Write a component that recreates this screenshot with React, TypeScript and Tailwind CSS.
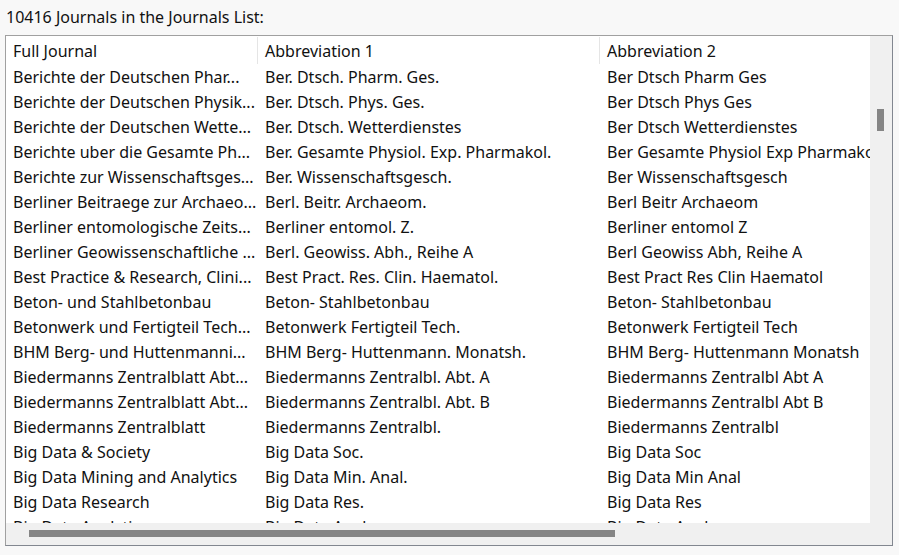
type Row = [string, string, string];

const rows: Row[] = [
  ["Berichte der Deutschen Phar...", "Ber. Dtsch. Pharm. Ges.", "Ber Dtsch Pharm Ges"],
  ["Berichte der Deutschen Physik...", "Ber. Dtsch. Phys. Ges.", "Ber Dtsch Phys Ges"],
  ["Berichte der Deutschen Wette...", "Ber. Dtsch. Wetterdienstes", "Ber Dtsch Wetterdienstes"],
  ["Berichte uber die Gesamte Ph...", "Ber. Gesamte Physiol. Exp. Pharmakol.", "Ber Gesamte Physiol Exp Pharmakol"],
  ["Berichte zur Wissenschaftsges...", "Ber. Wissenschaftsgesch.", "Ber Wissenschaftsgesch"],
  ["Berliner Beitraege zur Archaeo...", "Berl. Beitr. Archaeom.", "Berl Beitr Archaeom"],
  ["Berliner entomologische Zeits...", "Berliner entomol. Z.", "Berliner entomol Z"],
  ["Berliner Geowissenschaftliche ...", "Berl. Geowiss. Abh., Reihe A", "Berl Geowiss Abh, Reihe A"],
  ["Best Practice & Research, Clini...", "Best Pract. Res. Clin. Haematol.", "Best Pract Res Clin Haematol"],
  ["Beton- und Stahlbetonbau", "Beton- Stahlbetonbau", "Beton- Stahlbetonbau"],
  ["Betonwerk und Fertigteil Tech...", "Betonwerk Fertigteil Tech.", "Betonwerk Fertigteil Tech"],
  ["BHM Berg- und Huttenmanni...", "BHM Berg- Huttenmann. Monatsh.", "BHM Berg- Huttenmann Monatsh"],
  ["Biedermanns Zentralblatt Abt...", "Biedermanns Zentralbl. Abt. A", "Biedermanns Zentralbl Abt A"],
  ["Biedermanns Zentralblatt Abt...", "Biedermanns Zentralbl. Abt. B", "Biedermanns Zentralbl Abt B"],
  ["Biedermanns Zentralblatt", "Biedermanns Zentralbl.", "Biedermanns Zentralbl"],
  ["Big Data & Society", "Big Data Soc.", "Big Data Soc"],
  ["Big Data Mining and Analytics", "Big Data Min. Anal.", "Big Data Min Anal"],
  ["Big Data Research", "Big Data Res.", "Big Data Res"],
  ["Big Data Analytics", "Big Data Anal.", "Big Data Anal"],
];

function Cells({ r, header }: { r: Row; header?: boolean }) {
  return (
    <>
      <div className="w-[252px] shrink-0 overflow-hidden whitespace-nowrap pl-[7px] relative">
        {r[0]}
        {header && <span className="absolute right-0 top-0 bottom-[1px] w-px bg-[#e5e5e5]" />}
      </div>
      <div className="w-[342px] shrink-0 overflow-hidden whitespace-nowrap pl-[7px] relative">
        {r[1]}
        {header && <span className="absolute right-0 top-0 bottom-[1px] w-px bg-[#e5e5e5]" />}
      </div>
      <div className="w-[400px] shrink-0 overflow-hidden whitespace-nowrap pl-[7px]">{r[2]}</div>
    </>
  );
}

export default function App() {
  return (
    <div
      className="w-[899px] h-[555px] bg-[#f8f8f8] text-[#111] text-[16px] flex flex-col"
      style={{ fontFamily: '"Noto Sans", "Segoe UI", sans-serif' }}
    >
      <div className="h-[35px] pl-[6px] pt-[5px] leading-[24px]">10416 Journals in the Journals List:</div>

      <div className="ml-[5px] w-[888px] h-[511px] border border-l-[#a0a0a0] border-t-[#a0a0a0] border-r-[#828790] border-b-[#828790] flex flex-col bg-white">
        <div className="flex flex-1 min-h-0">
          <div className="flex-1 min-w-0 overflow-hidden flex flex-col pt-[1px]">
            <div className="flex h-[28px] shrink-0 items-center leading-[28px]">
              <Cells r={["Full Journal", "Abbreviation 1", "Abbreviation 2"]} header />
            </div>
            {rows.map((r, i) => (
              <div key={i} className="flex h-[25px] shrink-0 items-center leading-[25px]">
                <Cells r={r} />
              </div>
            ))}
          </div>
          <div className="w-[22px] shrink-0 bg-[#f0f0f0] pt-[73px] pl-[7px]">
            <div className="w-[7px] h-[22px] bg-[#858585]" />
          </div>
        </div>
        <div className="h-[22px] shrink-0 bg-[#f0f0f0] pt-[7px] pl-[23px]">
          <div className="w-[586px] h-[7px] bg-[#858585]" />
        </div>
      </div>
    </div>
  );
}
